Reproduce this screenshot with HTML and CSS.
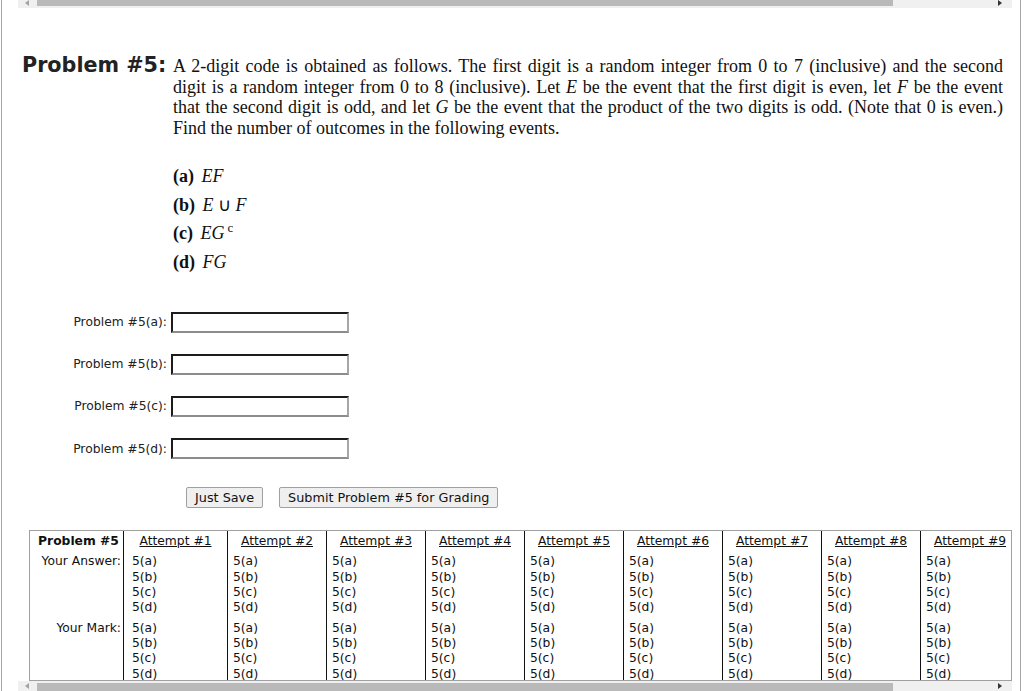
FILE: index.html
```html
<!DOCTYPE html>
<html>
<head>
<meta charset="utf-8">
<link rel="stylesheet" href="styles.css">
</head>
<body>
<div class="page">
  <div class="hscroll top">
    <span class="arr left"><svg width="5" height="6" viewBox="0 0 5 6"><path d="M4 0 L0 3 L4 6 Z" fill="#a3a3a3"/></svg></span>
    <div class="thumb top-thumb"></div>
    <span class="arr right"><svg width="5" height="6" viewBox="0 0 5 6"><path d="M0 0 L4 3 L0 6 Z" fill="#333"/></svg></span>
  </div>

  <div class="problem">
    <div class="ptitle">Problem #5:</div>
    <div class="ptext">
      <span class="ln">A 2-digit code is obtained as follows. The first digit is a random integer from 0 to 7 (inclusive) and the second</span>
      <span class="ln">digit is a random integer from 0 to 8 (inclusive). Let <i>E</i> be the event that the first digit is even, let <i>F</i> be the event</span>
      <span class="ln">that the second digit is odd, and let <i>G</i> be the event that the product of the two digits is odd. (Note that 0 is even.)</span>
      <span class="ln last">Find the number of outcomes in the following events.</span>
    </div>
  </div>

  <div class="parts">
    <div class="part"><b>(a)</b> <i>EF</i></div>
    <div class="part"><b>(b)</b> <i>E</i> ∪ <i>F</i></div>
    <div class="part"><b>(c)</b> <i>EG</i><sup>c</sup></div>
    <div class="part"><b>(d)</b> <i>FG</i></div>
  </div>

  <div class="answers">
    <label class="lbl">Problem #5(a):</label><input class="ans" type="text">
    <label class="lbl">Problem #5(b):</label><input class="ans" type="text">
    <label class="lbl">Problem #5(c):</label><input class="ans" type="text">
    <label class="lbl">Problem #5(d):</label><input class="ans" type="text">
  </div>

  <div class="buttons">
    <button class="btn">Just Save</button>
    <button class="btn">Submit Problem #5 for Grading</button>
  </div>

  <div class="tablewrap">
    <div class="tbox">
      <table class="att">
        <tr class="hrow">
          <th class="c0">Problem #5</th>
          <th class="c1"><u>Attempt #1</u></th>
          <th class="cn"><u>Attempt #2</u></th>
          <th class="cn"><u>Attempt #3</u></th>
          <th class="cn"><u>Attempt #4</u></th>
          <th class="cn"><u>Attempt #5</u></th>
          <th class="cn"><u>Attempt #6</u></th>
          <th class="cn"><u>Attempt #7</u></th>
          <th class="cn"><u>Attempt #8</u></th>
          <th class="cn"><u>Attempt #9</u></th>
        </tr>
        <tr class="arow">
          <td class="rl">Your Answer:</td>
          <td class="d1">5(a)<br>5(b)<br>5(c)<br>5(d)</td>
          <td>5(a)<br>5(b)<br>5(c)<br>5(d)</td>
          <td>5(a)<br>5(b)<br>5(c)<br>5(d)</td>
          <td>5(a)<br>5(b)<br>5(c)<br>5(d)</td>
          <td>5(a)<br>5(b)<br>5(c)<br>5(d)</td>
          <td>5(a)<br>5(b)<br>5(c)<br>5(d)</td>
          <td>5(a)<br>5(b)<br>5(c)<br>5(d)</td>
          <td>5(a)<br>5(b)<br>5(c)<br>5(d)</td>
          <td>5(a)<br>5(b)<br>5(c)<br>5(d)</td>
        </tr>
        <tr class="mrow">
          <td class="rl">Your Mark:</td>
          <td class="d1">5(a)<br>5(b)<br>5(c)<br>5(d)</td>
          <td>5(a)<br>5(b)<br>5(c)<br>5(d)</td>
          <td>5(a)<br>5(b)<br>5(c)<br>5(d)</td>
          <td>5(a)<br>5(b)<br>5(c)<br>5(d)</td>
          <td>5(a)<br>5(b)<br>5(c)<br>5(d)</td>
          <td>5(a)<br>5(b)<br>5(c)<br>5(d)</td>
          <td>5(a)<br>5(b)<br>5(c)<br>5(d)</td>
          <td>5(a)<br>5(b)<br>5(c)<br>5(d)</td>
          <td>5(a)<br>5(b)<br>5(c)<br>5(d)</td>
        </tr>
      </table>
    </div>
    <div class="hscroll bottom">
      <span class="arr left"><svg width="5" height="6" viewBox="0 0 5 6"><path d="M4 0 L0 3 L4 6 Z" fill="#a3a3a3"/></svg></span>
      <div class="thumb"></div>
      <span class="arr right"><svg width="5" height="6" viewBox="0 0 5 6"><path d="M0 0 L4 3 L0 6 Z" fill="#333"/></svg></span>
    </div>
  </div>
</div>
</body>
</html>
```

FILE: styles.css
```css
html, body {
  margin: 0;
  padding: 0;
  background: #fff;
}
body {
  font-family: "DejaVu Sans", Verdana, sans-serif;
  color: #111;
  overflow: hidden;
}
.page {
  margin-left: 1px;
  width: 1018px;
  height: 691px;
  border-left: 1px solid #a6a6a6;
  border-right: 1px solid #a6a6a6;
  overflow: hidden;
}

/* fake horizontal scrollbars */
.hscroll {
  margin-left: 16px;
  width: 994px;
  height: 8px;
  background: #f0f0f0;
  display: flex;
  align-items: flex-start;
}
.hscroll .arr {
  width: 19px;
  display: flex;
  justify-content: center;
}
.hscroll .arr.right {
  width: 118px;
  justify-content: flex-end;
  padding-right: 8px;
  box-sizing: border-box;
}
.hscroll .thumb {
  width: 856px;
  height: 6px;
  background: #b9b9b9;
}
.hscroll.bottom {
  height: 10px;
  align-items: center;
}
.hscroll.bottom .thumb {
  height: 8px;
  align-self: flex-end;
}

/* problem text */
.problem {
  display: flex;
  align-items: baseline;
  margin-top: 45px;
  padding-left: 20px;
}
.ptitle {
  width: 151px;
  flex: none;
  font-family: "DejaVu Sans", Verdana, sans-serif;
  font-weight: bold;
  font-size: 20.7px;
  color: #222;
}
.ptext {
  width: 830px;
  font-family: "Liberation Serif", "Times New Roman", serif;
  font-size: 18px;
  line-height: 20.7px;
  color: #111;
}
.ln {
  display: block;
  text-align: justify;
  text-align-last: justify;
  white-space: nowrap;
}
.ln.last {
  text-align: left;
  text-align-last: left;
}

.parts {
  margin-top: 23px;
  margin-left: 171px;
  font-family: "Liberation Serif", "Times New Roman", serif;
  font-size: 18px;
}
.part {
  line-height: 28.7px;
  height: 28.7px;
}
.part b {
  margin-right: 3px;
}
.part sup {
  font-size: 13px;
  vertical-align: 7px;
  line-height: 0;
  margin-left: 3px;
}

/* answer inputs */
.answers {
  margin-top: 35px;
  display: grid;
  grid-template-columns: 165px 178px;
  column-gap: 4px;
  row-gap: 21.2px;
  align-items: center;
}
.lbl {
  text-align: right;
  font-size: 12.3px;
  color: #222;
}
.ans {
  box-sizing: border-box;
  width: 178px;
  height: 21px;
  margin: 0;
  padding: 0;
  border: 2px solid;
  border-color: #1c1c1c #a6a6a6 #8c8c8c #1c1c1c;
  background: #fff;
}

.buttons {
  margin-top: 28px;
  margin-left: 184px;
  display: flex;
  gap: 16px;
}
.btn {
  font-family: "DejaVu Sans", Verdana, sans-serif;
  font-size: 12.8px;
  color: #111;
  height: 21px;
  padding: 0 8px;
  background: #efefef;
  border: 1px solid #a0a0a0;
  border-radius: 2px;
  line-height: 17px;
}

/* attempts table */
.tablewrap {
  margin-top: 22px;
}
.tbox {
  margin-left: 27px;
  width: 981px;
  height: 149px;
  border: 1px solid #a0a0a0;
  overflow: hidden;
}
.att {
  table-layout: fixed;
  width: 989px;
  border-collapse: separate;
  border-spacing: 0;
  font-size: 12.3px;
  line-height: 15.3px;
  color: #111;
}
.att th, .att td {
  box-sizing: border-box;
  padding: 0;
  vertical-align: top;
  white-space: nowrap;
  overflow: hidden;
}
.att th + th, .att td + td {
  border-left: 1px solid #111;
}
.att th {
  font-weight: normal;
  text-align: center;
  padding-top: 3px;
  padding-bottom: 4px;
}
.att th.c0 {
  width: 93px;
  font-weight: bold;
  padding-left: 4px;
}
.att th.c1 { width: 104px; }
.att th.cn { width: 99px; }
.att td {
  padding-left: 5px;
  text-align: left;
}
.att td.d1 { padding-left: 8px; }
.att td.rl {
  text-align: right;
  padding-right: 2px;
  padding-left: 0;
}
.arow td { padding-top: 1px; }
.mrow td { padding-top: 5px; }
```
